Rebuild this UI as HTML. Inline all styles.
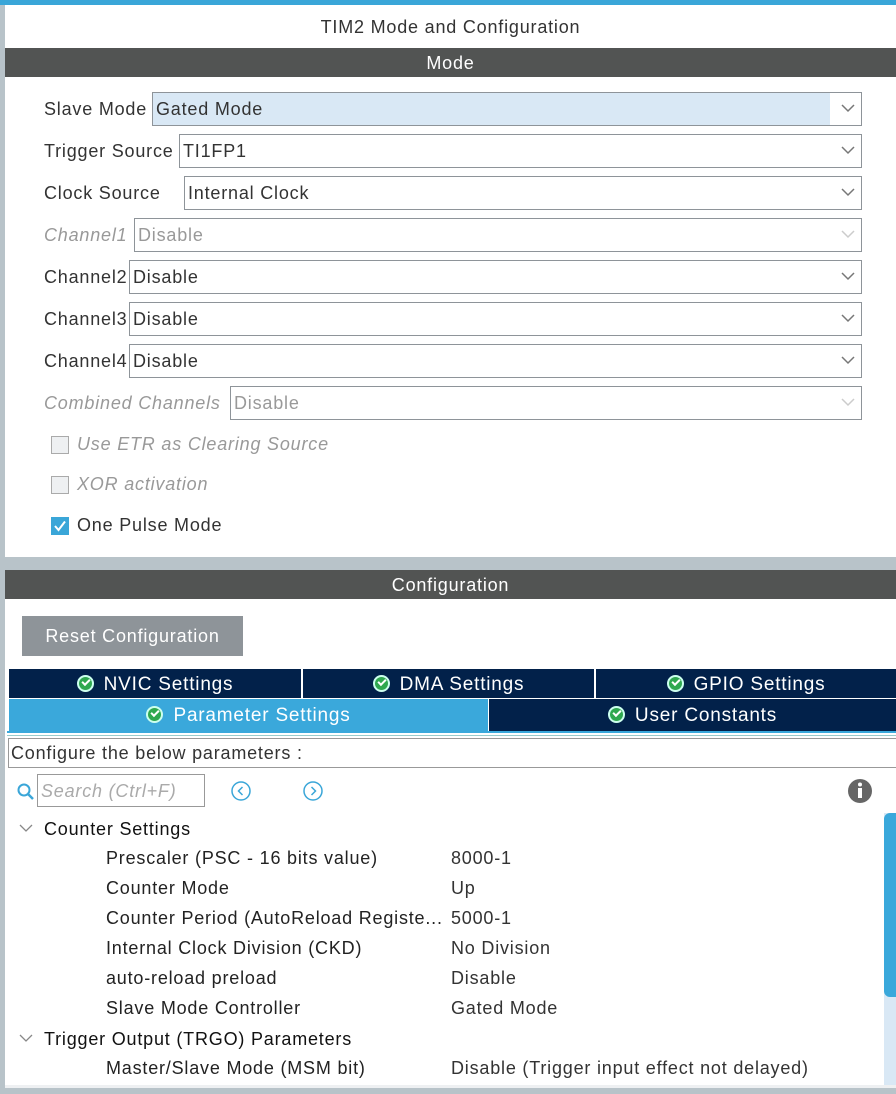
<!DOCTYPE html><html><head><style>
*{margin:0;padding:0;box-sizing:border-box}
body{width:896px;height:1094px;background:#b8c3c9;font-family:"Liberation Sans",sans-serif;font-size:18px;letter-spacing:0.8px;color:#333;position:relative;overflow:hidden}
.a{position:absolute}
.lbl{position:absolute;left:44px;white-space:nowrap;line-height:35px}
.dd{position:absolute;right:34px;height:34px;border:1px solid #8e9499;background:#fff;line-height:33px;padding-left:3px;white-space:nowrap}
.dd.dis{color:#999;}
.dd svg{position:absolute;right:6px;top:11px}
.it{font-style:italic;color:#999}
.cb{position:absolute;left:51px;width:18px;height:18px;border:1px solid #aaa;background:#eef0f2}
.tab{position:absolute;background:#02214a;color:#fff;text-align:center;font-size:19px;line-height:32px}
.ck{display:inline-block;width:17px;height:17px;border-radius:50%;background:#2fa84f;border:2px solid #cfe;vertical-align:-2px;margin-right:10px;position:relative}
.ck:after{content:"";position:absolute;left:3px;top:2px;width:6px;height:3px;border-left:2px solid #fff;border-bottom:2px solid #fff;transform:rotate(-45deg)}
.tr{position:absolute;left:106px;line-height:31px;color:#222;white-space:nowrap}
.tv{position:absolute;left:451px;line-height:31px;color:#333;white-space:nowrap}
.hd{position:absolute;left:44px;line-height:31px;color:#111;white-space:nowrap}
.chev{position:absolute;left:19px;}
</style></head><body>
<div class="a" style="left:0;top:0;width:896px;height:5px;background:#3aa6d8"></div>
<div class="a" style="left:5px;top:5px;width:891px;height:552px;background:#fff"></div>
<div class="a" style="left:5px;top:5px;width:891px;height:43px;line-height:45px;text-align:center;color:#333">TIM2 Mode and Configuration</div>
<div class="a" style="left:5px;top:48px;width:891px;height:29px;background:#525453;color:#fff;text-align:center;line-height:30px">Mode</div>

<div class="lbl" style="top:92px">Slave Mode</div>
<div class="dd" style="left:152px;top:92px;background:linear-gradient(to right,#d9e8f5 0,#d9e8f5 677px,#fff 677px)">Gated Mode<svg width="14" height="9"><path d="M1 1l6 6 6-6" fill="none" stroke="#777" stroke-width="1.5"/></svg></div>
<div class="lbl" style="top:134px">Trigger Source</div>
<div class="dd" style="left:179px;top:134px">TI1FP1<svg width="14" height="9"><path d="M1 1l6 6 6-6" fill="none" stroke="#777" stroke-width="1.5"/></svg></div>
<div class="lbl" style="top:176px">Clock Source</div>
<div class="dd" style="left:184px;top:176px">Internal Clock<svg width="14" height="9"><path d="M1 1l6 6 6-6" fill="none" stroke="#777" stroke-width="1.5"/></svg></div>
<div class="lbl it" style="top:218px">Channel1</div>
<div class="dd dis" style="left:134px;top:218px">Disable<svg width="14" height="9"><path d="M1 1l6 6 6-6" fill="none" stroke="#ccc" stroke-width="1.5"/></svg></div>
<div class="lbl" style="top:260px">Channel2</div>
<div class="dd" style="left:129px;top:260px">Disable<svg width="14" height="9"><path d="M1 1l6 6 6-6" fill="none" stroke="#777" stroke-width="1.5"/></svg></div>
<div class="lbl" style="top:302px">Channel3</div>
<div class="dd" style="left:129px;top:302px">Disable<svg width="14" height="9"><path d="M1 1l6 6 6-6" fill="none" stroke="#777" stroke-width="1.5"/></svg></div>
<div class="lbl" style="top:344px">Channel4</div>
<div class="dd" style="left:129px;top:344px">Disable<svg width="14" height="9"><path d="M1 1l6 6 6-6" fill="none" stroke="#777" stroke-width="1.5"/></svg></div>
<div class="lbl it" style="top:386px">Combined Channels</div>
<div class="dd dis" style="left:230px;top:386px">Disable<svg width="14" height="9"><path d="M1 1l6 6 6-6" fill="none" stroke="#ccc" stroke-width="1.5"/></svg></div>

<div class="cb" style="top:436px"></div><div class="lbl it" style="left:77px;top:427px">Use ETR as Clearing Source</div>
<div class="cb" style="top:476px"></div><div class="lbl it" style="left:77px;top:467px">XOR activation</div>
<div class="cb" style="top:517px;background:#3aa6d8;border-color:#3aa6d8"><svg width="16" height="16" style="position:absolute;left:0;top:0"><path d="M3 8l3.5 4L13 3.5" fill="none" stroke="#fff" stroke-width="2"/></svg></div><div class="lbl" style="left:77px;top:508px">One Pulse Mode</div>

<div class="a" style="left:5px;top:570px;width:891px;height:515px;background:#fff"></div>
<div class="a" style="left:5px;top:570px;width:891px;height:29px;background:#525453;color:#fff;text-align:center;line-height:30px">Configuration</div>
<div class="a" style="left:22px;top:616px;width:221px;height:40px;background:#8e9499;color:#fff;text-align:center;line-height:41px">Reset Configuration</div>

<div class="tab" style="left:9px;top:669px;width:292px;height:29px"><span class="ck"></span>NVIC Settings</div>
<div class="tab" style="left:303px;top:669px;width:291px;height:29px"><span class="ck"></span>DMA Settings</div>
<div class="tab" style="left:596px;top:669px;width:300px;height:29px"><span class="ck"></span>GPIO Settings</div>
<div class="tab" style="left:9px;top:699px;width:479px;height:32px;background:#3aa8db;line-height:33px"><span class="ck"></span>Parameter Settings</div>
<div class="tab" style="left:489px;top:699px;width:407px;height:32px;line-height:33px"><span class="ck"></span>User Constants</div>
<div class="a" style="left:7px;top:731px;width:889px;height:2px;background:#3aa8db"></div>
<div class="a" style="left:7px;top:735px;width:889px;height:1px;background:#9cc"></div>
<div class="a" style="left:8px;top:738px;width:888px;height:30px;border:1px solid #999;border-right:none;line-height:29px;padding-left:2px;color:#333">Configure the below parameters :</div>

<svg class="a" style="left:16px;top:782px" width="20" height="20"><circle cx="8" cy="8" r="5.5" fill="none" stroke="#3aa6d8" stroke-width="2"/><path d="M12 12l5 5" stroke="#3aa6d8" stroke-width="2.5"/></svg>
<div class="a" style="left:37px;top:774px;width:168px;height:33px;border:1px solid #999;color:#aaa;font-style:italic;line-height:32px;padding-left:3px;overflow:hidden;white-space:nowrap">Search (Ctrl+F)</div>
<svg class="a" style="left:230px;top:780px" width="22" height="22"><circle cx="11" cy="11" r="9" fill="none" stroke="#3aa6d8" stroke-width="1.5"/><path d="M12.5 7l-4 4 4 4" fill="none" stroke="#3aa6d8" stroke-width="1.5"/></svg>
<svg class="a" style="left:302px;top:780px" width="22" height="22"><circle cx="11" cy="11" r="9" fill="none" stroke="#3aa6d8" stroke-width="1.5"/><path d="M9.5 7l4 4-4 4" fill="none" stroke="#3aa6d8" stroke-width="1.5"/></svg>
<svg class="a" style="left:847px;top:778px" width="26" height="26"><circle cx="13" cy="13" r="12" fill="#666"/><rect x="11" y="10" width="4" height="10" fill="#fff"/><circle cx="13" cy="6.5" r="2" fill="#fff"/></svg>

<div class="a" style="left:884px;top:813px;width:12px;height:272px;background:#d9e8f5"></div>
<div class="a" style="left:884px;top:813px;width:12px;height:184px;background:#3aa8db;border-radius:6px 0 0 6px"></div>

<svg class="chev" style="top:823px" width="14" height="10"><path d="M1 2l6 6 6-6" fill="none" stroke="#888" stroke-width="1.3"/></svg>
<div class="hd" style="top:814px">Counter Settings</div>
<div class="tr" style="top:843px">Prescaler (PSC - 16 bits value)</div><div class="tv" style="top:843px">8000-1</div>
<div class="tr" style="top:873px">Counter Mode</div><div class="tv" style="top:873px">Up</div>
<div class="tr" style="top:903px">Counter Period (AutoReload Registe...</div><div class="tv" style="top:903px">5000-1</div>
<div class="tr" style="top:933px">Internal Clock Division (CKD)</div><div class="tv" style="top:933px">No Division</div>
<div class="tr" style="top:963px">auto-reload preload</div><div class="tv" style="top:963px">Disable</div>
<div class="tr" style="top:993px">Slave Mode Controller</div><div class="tv" style="top:993px">Gated Mode</div>
<svg class="chev" style="top:1033px" width="14" height="10"><path d="M1 2l6 6 6-6" fill="none" stroke="#888" stroke-width="1.3"/></svg>
<div class="hd" style="top:1024px">Trigger Output (TRGO) Parameters</div>
<div class="tr" style="top:1053px">Master/Slave Mode (MSM bit)</div><div class="tv" style="top:1053px">Disable (Trigger input effect not delayed)</div>
<div class="a" style="left:5px;top:1085px;width:891px;height:3px;background:#eef0f2"></div>
</body></html>
